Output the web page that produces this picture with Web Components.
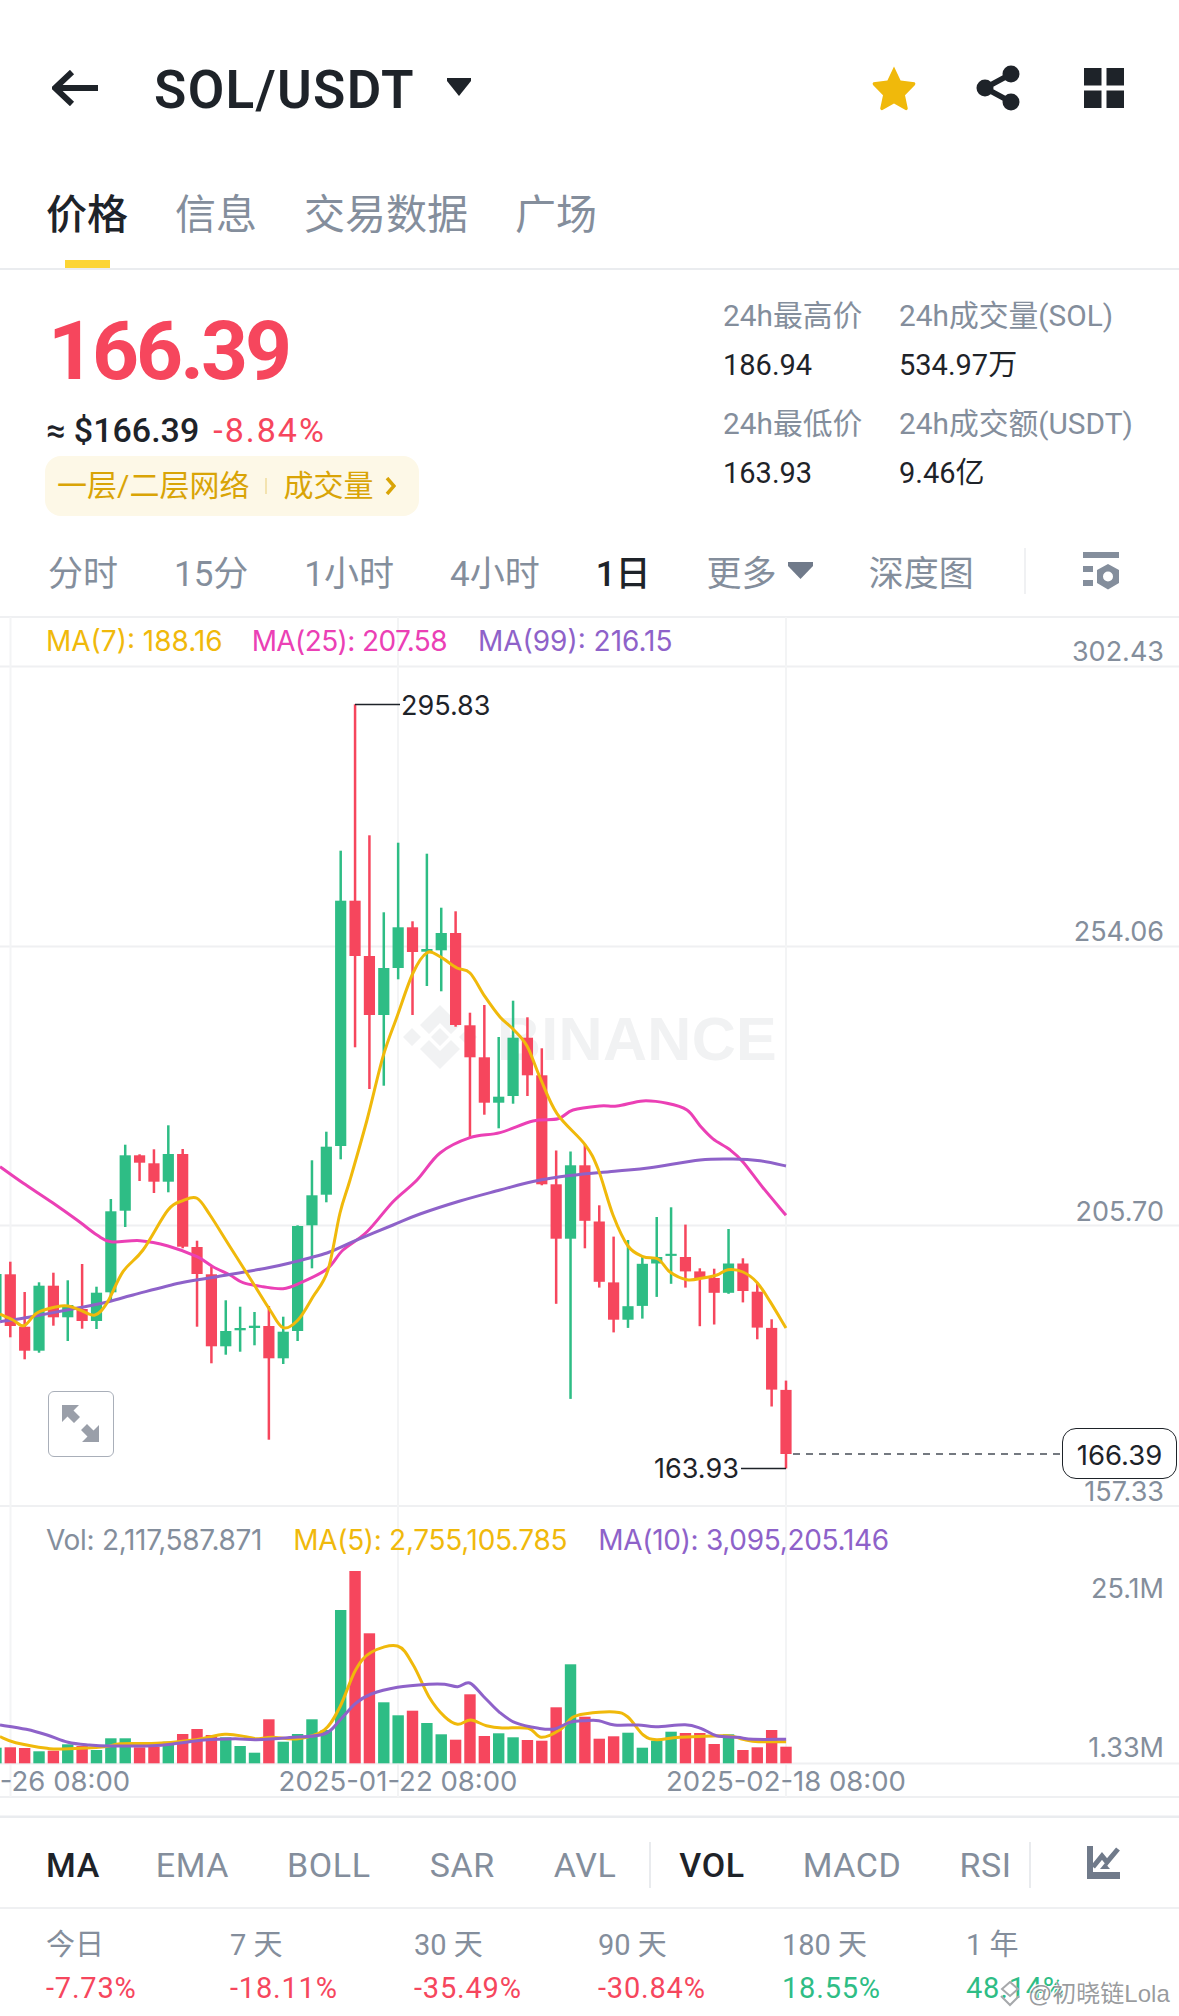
<!DOCTYPE html>
<html lang="zh">
<head>
<meta charset="utf-8">
<title>SOL/USDT</title>
<style>
  html, body { margin: 0; padding: 0; background: #fff; }
  body {
    width: 1179px; height: 2016px; overflow: hidden; position: relative;
    font-family: Roboto, "Noto Sans CJK SC", sans-serif; color: #1E2329;
  }
</style>
</head>
<body>
  <app-header></app-header>
  <tab-bar>
    <tab-item active>价格</tab-item>
    <tab-item>信息</tab-item>
    <tab-item>交易数据</tab-item>
    <tab-item>广场</tab-item>
  </tab-bar>
  <price-summary></price-summary>
  <period-bar></period-bar>
  <kline-chart></kline-chart>
  <indicator-bar></indicator-bar>
  <return-strip></return-strip>
  <weibo-mark></weibo-mark>

<script>
// top bar: back, pair name, favourite / share / layout icons
class AppHeader extends HTMLElement {
  constructor() {
    super();
    this.attachShadow({ mode: "open" }).innerHTML = `
    <style>
      :host { display: flex; align-items: center; height: 176px; padding: 0 55px 0 52px; box-sizing: border-box; }
      .title { font-size: 53px; font-weight: 600; margin-left: 54px; margin-top: 4px; letter-spacing: 1.3px; line-height: 60px; }
      .caret { margin-left: 32px; margin-top: -3px; display: block; }
      .icons { margin-left: auto; display: flex; align-items: center; }
      svg { display: block; }
    </style>
    <svg width="48" height="36" viewBox="0 0 48 36"><path d="M20 2 L3 18 L20 34 M4 18 H46" fill="none" stroke="#1E2329" stroke-width="6"/></svg>
    <span class="title">SOL/USDT</span>
    <svg class="caret" width="24" height="18" viewBox="0 0 24 18"><path d="M0 0 H24 V3 L12 18 L0 3 Z" fill="#1E2329"/></svg>
    <div class="icons">
      <svg width="44" height="46" viewBox="0 0 44 46" style="margin-right:60px"><path d="M22 1.5 L28.6 15.4 L42.6 17.2 Q44 18.5 43 20 L33 30.2 L35.8 43.4 Q35.3 45.6 33.5 45 L22 38.4 L10.5 45 Q8.7 45.6 8.2 43.4 L11 30.2 L1 20 Q0 18.5 1.4 17.2 L15.4 15.4 Z" fill="#F0B90B"/></svg>
      <svg width="44" height="46" viewBox="0 0 44 46" style="margin-right:64px"><path d="M35 9 L9 23 L35 37" fill="none" stroke="#1E2329" stroke-width="5.5"/><circle cx="35" cy="9" r="8.5" fill="#1E2329"/><circle cx="9" cy="23" r="8.5" fill="#1E2329"/><circle cx="35" cy="37" r="8.5" fill="#1E2329"/></svg>
      <svg width="40" height="40" viewBox="0 0 40 40"><path d="M0 0 H17.5 V17.5 H0 Z M22.5 0 H40 V17.5 H22.5 Z M0 22.5 H17.5 V40 H0 Z M22.5 22.5 H40 V40 H22.5 Z" fill="#1E2329"/></svg>
    </div>`;
  }
}
customElements.define("app-header", AppHeader);

class TabBar extends HTMLElement {
  constructor() {
    super();
    this.attachShadow({ mode: "open" }).innerHTML = `
    <style>
      :host { display: flex; gap: 47px; height: 94px; padding-left: 46px; box-sizing: border-box; border-bottom: 2px solid #EAECEF; }
    </style>
    <slot></slot>`;
  }
}
customElements.define("tab-bar", TabBar);

class TabItem extends HTMLElement {
  constructor() {
    super();
    this.attachShadow({ mode: "open" }).innerHTML = `
    <style>
      :host { display: block; position: relative; height: 92px; line-height: 78px; font-size: 41px; color: #848E9C; }
      :host([active]) { color: #1E2329; font-weight: 500; }
      :host([active])::after {
        content: ""; position: absolute; left: 50%; bottom: 0; width: 45px; height: 8px; margin-left: -22.5px; background: #FCD535;
      }
    </style>
    <slot></slot>`;
  }
}
customElements.define("tab-item", TabItem);

// last price block and the 24h numbers on the right
class PriceSummary extends HTMLElement {
  constructor() {
    super();
    this.attachShadow({ mode: "open" }).innerHTML = `
    <style>
      :host { display: flex; height: 275px; box-sizing: border-box; }
      .left { width: 723px; padding-left: 46px; box-sizing: border-box; }
      .price { font-size: 82px; font-weight: 700; color: #F6465D; line-height: 82px; margin-top: 40px; margin-left: 2px; letter-spacing: -3px; }
      .fiat { display: flex; gap: 14px; font-size: 34px; line-height: 40px; margin-top: 18px; font-weight: 500; }
      .fiat .chg { color: #F6465D; font-weight: 400; letter-spacing: 2px; }
      .pill {
        display: inline-flex; align-items: center; width: 374px; height: 60px; margin-top: 6px; margin-left: -1px; padding-left: 12px; box-sizing: border-box;
        background: #FDF8E7; border-radius: 16px; color: #D9A406; font-size: 30px; line-height: 58px; white-space: nowrap;
      }
      .sep { width: 2px; height: 16px; background: #F3E3B0; margin: 0 16px 0 16px; }
      .pill svg { margin-left: 12px; }
      .stats { display: grid; grid-template-columns: 176px auto; grid-auto-rows: 40px; padding-top: 26px; font-size: 29px; line-height: 40px; white-space: nowrap; }
      .stats .k { color: #848E9C; font-size: 29.8px; }
      .stats .v { margin-top: 9px; }
      .stats .k2 { margin-top: 28px; }
      .stats .v2 { margin-top: 37px; }
    </style>
    <div class="left">
      <div class="price">166.39</div>
      <div class="fiat"><span>≈ $166.39</span><span class="chg">-8.84%</span></div>
      <div class="pill"><span>一层/二层网络</span><i class="sep"></i><span>成交量</span>
        <svg width="11" height="18" viewBox="0 0 11 18"><path d="M2 1 L9 9 L2 17" fill="none" stroke="#D9A406" stroke-width="3.5"/></svg></div>
    </div>
    <div class="stats">
      <span class="k">24h最高价</span><span class="k">24h成交量(SOL)</span>
      <span class="v">186.94</span><span class="v">534.97万</span>
      <span class="k k2">24h最低价</span><span class="k k2">24h成交额(USDT)</span>
      <span class="v v2">163.93</span><span class="v v2">9.46亿</span>
    </div>`;
  }
}
customElements.define("price-summary", PriceSummary);

class PeriodBar extends HTMLElement {
  constructor() {
    super();
    this.attachShadow({ mode: "open" }).innerHTML = `
    <style>
      :host { display: flex; align-items: center; height: 71px; padding: 0 0 20px 48px; box-sizing: border-box; font-size: 35px; color: #848E9C; white-space: nowrap; position: relative; }
      span { margin-right: 56px; }
      .on { color: #1E2329; font-weight: 500; margin-right: 56px; }
      .more { display: flex; align-items: center; gap: 11px; margin-right: 56px; }
      .div { width: 2px; height: 46px; background: #F0F1F3; margin-right: 57px; }
      svg { display: block; }
    </style>
    <span>分时</span><span>15分</span><span>1小时</span><span>4小时</span><span class="on">1日</span>
    <span class="more">更多<svg width="25" height="17" viewBox="0 0 25 17"><path d="M0 0 H25 V4 L12.5 17 L0 4 Z" fill="#707A8A"/></svg></span>
    <span style="margin-right:50px">深度图</span><i class="div"></i>
    <svg width="37" height="38" viewBox="0 0 37 38"><path d="M0 0 H36 V6 H0 Z M0 14 H10 V20 H0 Z M0 28 H10 V34 H0 Z" fill="#848E9C"/><path fill-rule="evenodd" d="M25 12 L36 18 V31 L25 37.5 L14 31 V18 Z M25 19.5 A5 5 0 1 0 25 29.5 A5 5 0 1 0 25 19.5 Z" fill="#848E9C"/></svg>`;
  }
}
customElements.define("period-bar", PeriodBar);

// [high, bodyTop, bodyBottom, low, up?] in page pixels, read off the reference
const CANDLES = [
  [1265,1274,1320,1330,1],
  [1261.7,1274.3,1326,1337.3,0],[1292,1326.7,1350.7,1359.3,0],[1282.3,1285.7,1350.7,1352.7,1],[1272.7,1285.7,1317.3,1325.7,0],
  [1280.3,1305,1317.3,1341,1],[1264,1309,1321,1328.7,0],[1286.7,1292.7,1321,1329,1],[1199,1211.3,1292.3,1300,1],
  [1144.7,1155.3,1210.7,1227,1],[1154.3,1155.3,1162.7,1181,0],[1149.3,1163.3,1181.7,1193,0],[1125.3,1154,1181.7,1192.3,1],
  [1149,1154,1246.7,1248.3,0],[1240.7,1247,1274,1326.7,0],[1266.7,1274.3,1346.3,1363.3,0],[1300.3,1331,1346.3,1354.7,1],
  [1306.7,1328,1330.3,1351.7,1],[1312,1325.7,1328,1345.3,1],[1306,1326,1358.3,1439.7,0],[1316.7,1331.7,1358.3,1364,1],
  [1225.3,1226,1331,1341,1],[1160.3,1195.3,1225.3,1268.3,1],[1131.7,1146.7,1194.7,1202.3,1],[850.7,900.7,1146,1159.3,1],
  [704.3,900.7,956,1047.3,0],[835.3,956,1015,1089,0],[912.3,968,1015,1085.7,1],[842.7,927.3,968,979.3,1],
  [921.3,927.3,952,1015,0],[853.7,949,951.7,986,1],[907.7,933,950.3,991.3,1],[911.3,933,1025,1026.7,0],
  [1012.7,1025.3,1057.3,1137.3,0],[1005,1057.3,1102.7,1114.7,0],[1037,1096.7,1102.7,1128.3,1],[1000.7,1037.7,1096,1103.7,1],
  [1017.3,1037.7,1075.3,1096,0],[1048.3,1075.3,1184.3,1185.3,0],[1150.5,1184.3,1238.7,1303.8,0],[1151.5,1165.3,1238.7,1398.9,1],
  [1144.6,1165.3,1220.8,1248.3,0],[1205.3,1221.5,1281.8,1287.6,0],[1236.6,1282.4,1319.7,1332.4,0],[1240,1306.2,1319.7,1327.9,1],
  [1256.6,1263.8,1305.9,1318.6,1],[1217,1257,1263.5,1296.9,1],[1207.3,1253.8,1255.9,1283.8,1],[1224.6,1257,1271.4,1287.6,0],
  [1268.3,1271.4,1278,1326.2,0],[1268.7,1278,1292.8,1324.5,0],[1229,1263.5,1292.8,1293.8,1],[1258.3,1263.5,1291,1302.4,0],
  [1282.4,1291.7,1327.6,1339.3,0],[1319.3,1327.9,1389.6,1406.5,0],[1380.6,1389.9,1454,1468.5,0]
];
const MA7 = [[0,1314],[13,1320],[24,1325.7],[37,1313],[57,1306.7],[68,1306],[80,1310],[95,1315],[107,1303],[123,1271.7],[143,1250],[168,1210],[183,1200.7],[197,1198.3],[210,1215],[230,1246.7],[253,1283],[270,1310],[283,1327.7],[298,1320],[313,1296.7],[328,1270],[340,1213],[350,1180],[367,1120],[383,1056.7],[397,1016.7],[413,973],[427,952.7],[440,956.7],[457,968],[470,973],[485,996.7],[500,1017],[513,1029],[527,1046],[540,1077.5],[557,1113.6],[585,1144.6],[598,1168.8],[613,1215],[628,1246],[643,1256.6],[658,1259],[670,1272],[687,1279.7],[703,1278],[717,1275],[728,1269.7],[743,1272],[757,1282.4],[770,1301.4],[786,1328]];
const MA25 = [[0,1166.7],[23,1183],[53,1203],[77,1220],[97,1235],[111,1241.7],[140,1240.7],[168,1246],[197,1256.7],[213,1266.7],[230,1275],[243,1282.7],[263,1286.7],[283,1288.7],[300,1283],[327,1269],[343,1250],[367,1231.7],[393,1201.7],[417,1180],[440,1153],[470,1137.7],[500,1132.6],[533,1121],[558,1118.8],[573,1110],[600,1106],[617,1106],[643,1100.9],[667,1103.3],[687,1110],[700,1125.7],[713,1138.8],[730,1149.8],[743,1161.9],[763,1187.7],[786,1215.3]];
const MA99 = [[0,1321.7],[30,1317],[67,1310],[103,1303],[133,1295],[180,1283],[217,1276.7],[267,1268],[290,1263],[327,1253],[353,1241.7],[393,1225],[420,1214],[460,1201],[500,1190],[533,1181.5],[570,1175.6],[617,1171],[650,1167.7],[700,1160],[733,1159],[760,1160.8],[786,1166]];
// volume: z values from the crop, x / 1.912 and 1500 + z / 3 below
const VOL_TOPS = [743,742,744,754,752,733,738,750,715,715,742,740,725,702,687,705,712,738,758,658,725,702,658,690,330,213,400,607,646,632,669,703,719,583,708,700,712,720,722,622,493,650,716,709,698,743,722,695,699,699,732,703,750,742,690,740];
const VOL_MA5 = [[0,710],[30,728],[90,745],[120,747],[200,740],[230,731],[300,730],[370,720],[430,703],[470,710],[490,716],[520,712],[570,716],[620,690],[650,620],[680,510],[710,457],[760,438],[790,495],[820,590],[850,650],[875,673],[900,660],[930,677],[960,684],[1010,685],[1035,712],[1070,690],[1095,652],[1120,641],[1175,636],[1200,650],[1230,705],[1255,719],[1300,712],[1390,707],[1420,718],[1450,725],[1503,725]];
const VOL_MA10 = [[0,675],[50,688],[90,705],[130,727],[170,735],[210,738],[290,737],[340,730],[390,720],[450,716],[490,719],[550,713],[620,702],[650,660],[680,610],[710,582],[760,562],[820,553],[850,553],[875,560],[898,549],[925,590],[955,637],[985,668],[1030,685],[1060,687],[1090,667],[1120,662],[1145,662],[1175,675],[1220,675],[1255,680],[1310,674],[1340,685],[1370,707],[1410,712],[1440,718],[1503,718]];

const GREEN = "#2EBD85", RED = "#F6465D";
const PITCH = (786 - 10.3) / 54;

function smooth(pts) {
  let d = "M" + pts[0][0] + " " + pts[0][1];
  for (let i = 0; i < pts.length - 1; i++) {
    const p0 = pts[i - 1] || pts[i], p1 = pts[i], p2 = pts[i + 1], p3 = pts[i + 2] || p2;
    const c1x = p1[0] + (p2[0] - p0[0]) / 6, c1y = p1[1] + (p2[1] - p0[1]) / 6;
    const c2x = p2[0] - (p3[0] - p1[0]) / 6, c2y = p2[1] - (p3[1] - p1[1]) / 6;
    d += ` C${c1x.toFixed(1)} ${c1y.toFixed(1)} ${c2x.toFixed(1)} ${c2y.toFixed(1)} ${p2[0]} ${p2[1]}`;
  }
  return d;
}

class KlineChart extends HTMLElement {
  constructor() {
    super();
    let candles = "", vols = "";
    CANDLES.forEach((c, i) => {
      const x = 10.3 + PITCH * (i - 1), col = c[4] ? GREEN : RED;
      candles += `<rect x="${(x - 1.25).toFixed(2)}" y="${c[0]}" width="2.5" height="${(c[3] - c[0]).toFixed(1)}" fill="${col}"/>`;
      candles += `<rect x="${(x - 5.6).toFixed(2)}" y="${c[1]}" width="11.2" height="${(c[2] - c[1]).toFixed(1)}" fill="${col}"/>`;
      const top = 1500 + VOL_TOPS[i] / 3;
      vols += `<rect x="${(x - 5.7).toFixed(2)}" y="${top.toFixed(1)}" width="11.4" height="${(1763.3 - top).toFixed(1)}" fill="${col}"/>`;
    });
    const volPts = a => a.map(p => [+(p[0] / 1.912).toFixed(1), +(1500 + p[1] / 3).toFixed(1)]);

    this.attachShadow({ mode: "open" }).innerHTML = `
    <style>
      :host { display: block; position: relative; height: 1202px; font-family: Inter, "Liberation Sans", sans-serif; font-size: 27px; color: #848E9C; overflow: hidden; }
      svg.canvas { position: absolute; left: 0; top: 0; }
      .t { position: absolute; line-height: 32px; height: 32px; white-space: nowrap; margin-top: -16px; }
      .r { right: 15px; }
      .d { color: #1E2329; }
      .legend { position: absolute; left: 46px; display: flex; font-size: 28px; line-height: 32px; margin-top: -16px; white-space: nowrap; }
      .wm { position: absolute; left: 497px; top: 393px; font-size: 61px; line-height: 60px; font-weight: 700; color: #F1F2F3; letter-spacing: .3px; font-family: "Liberation Sans", sans-serif; }
      .tag { position: absolute; left: 1062px; top: 812px; width: 115px; height: 51px; box-sizing: border-box; border: 1.5px solid #1E2329; border-radius: 14px; background: #fff; color: #1E2329; text-align: center; line-height: 52px; font-size: 27.5px; }
      .expand { position: absolute; left: 48px; top: 775px; width: 66px; height: 66px; box-sizing: border-box; border: 1.5px solid #A9AFB9; border-radius: 6px; background: #fff; display: flex; align-items: center; justify-content: center; }
      .date { position: absolute; top: 1149px; transform: translateX(-50%); font-size: 27.5px; line-height: 32px; white-space: nowrap; }
    </style>
    <div class="wm">BINANCE</div>
    <svg class="canvas" width="1179" height="1202" viewBox="0 616 1179 1202">
      <!-- grid -->
      <path d="M0 617 H1179 M0 666.5 H1179 M0 946.5 H1179 M0 1225.5 H1179 M0 1506 H1179 M0 1763.5 H1179 M0 1797 H1179" stroke="#EFF0F2" stroke-width="2"/>
      <path d="M10.5 617 V1797 M398 617 V1797 M786 617 V1797" stroke="#F3F4F5" stroke-width="2"/>
      <path d="M0 1818 H1179" stroke="#EAECEF" stroke-width="5"/>
      <!-- watermark logo -->
      <path d="M440 1002 L460 1022 L451 1031 L440 1020 L429 1031 L420 1022 Z M412 1025 L421 1034 L412 1043 L403 1034 Z M468 1025 L477 1034 L468 1043 L459 1034 Z M440 1025 L449 1034 L440 1043 L431 1034 Z M420 1046 L429 1037 L440 1048 L451 1037 L460 1046 L440 1066 Z" fill="#F1F2F3" transform="translate(0,3)"/>
      ${candles}
      <path d="${smooth(MA25)}" fill="none" stroke="#EB40B5" stroke-width="3"/>
      <path d="${smooth(MA99)}" fill="none" stroke="#8E62C9" stroke-width="3"/>
      <path d="${smooth(MA7)}" fill="none" stroke="#F0B90B" stroke-width="3"/>
      ${vols}
      <path d="${smooth(volPts(VOL_MA5))}" fill="none" stroke="#F0B90B" stroke-width="3"/>
      <path d="${smooth(volPts(VOL_MA10))}" fill="none" stroke="#8E62C9" stroke-width="3"/>
      <!-- high / low / last markers -->
      <path d="M355 704.5 H400 M741 1468.5 H786" stroke="#1E2329" stroke-width="1.5" fill="none"/>
      <path d="M793 1454 H1062" stroke="#474D57" stroke-width="1.5" stroke-dasharray="7 6" fill="none"/>
    </svg>

    <div class="legend" style="top:25px">
      <span style="color:#F0B90B;margin-right:29px">MA(7): 188.16</span>
      <span style="color:#EB40B5;margin-right:31px;letter-spacing:-.6px">MA(25): 207.58</span>
      <span style="color:#8E62C9">MA(99): 216.15</span>
    </div>
    <div class="legend" style="top:924px;letter-spacing:-.3px">
      <span style="margin-right:31px">Vol: 2,117,587.871</span>
      <span style="color:#F0B90B;margin-right:31px">MA(5): 2,755,105.785</span>
      <span style="color:#8E62C9">MA(10): 3,095,205.146</span>
    </div>

    <span class="t r" style="top:36px">302.43</span>
    <span class="t r" style="top:316px">254.06</span>
    <span class="t r" style="top:596px">205.70</span>
    <span class="t r" style="top:876px">157.33</span>
    <span class="t r" style="top:973px">25.1M</span>
    <span class="t r" style="top:1132px">1.33M</span>

    <span class="t d" style="left:401px;top:90px">295.83</span>
    <span class="t d" style="left:654px;top:853px">163.93</span>
    <div class="tag">166.39</div>

    <div class="expand">
      <svg width="38" height="38" viewBox="0 0 38 38"><path d="M0 0 H17 L11.5 5.5 L18 12 L12 18 L5.5 11.5 L0 17 Z M37 37 H20 L25.5 31.5 L19 25 L25 19 L31.5 25.5 L37 20 Z" fill="#9A9FA9"/></svg>
    </div>

    <span class="date" style="left:65px">-26 08:00</span>
    <span class="date" style="left:398px">2025-01-22 08:00</span>
    <span class="date" style="left:786px">2025-02-18 08:00</span>`;
  }
}
customElements.define("kline-chart", KlineChart);

class IndicatorBar extends HTMLElement {
  constructor() {
    super();
    this.attachShadow({ mode: "open" }).innerHTML = `
    <style>
      :host { display: flex; align-items: center; height: 91px; box-sizing: border-box; padding: 5px 0 0 46px; border-bottom: 2px solid #EFF0F2; font-size: 34px; letter-spacing: .6px; color: #848E9C; white-space: nowrap; }
      span { margin-right: 59px; }
      .on { color: #1E2329; font-weight: 500; }
      .div { width: 2px; height: 46px; background: #E9EBEE; }
      svg { display: block; margin-top: -5px; }
    </style>
    <span class="on" style="margin-right:56px">MA</span><span style="margin-right:58px">EMA</span><span>BOLL</span><span>SAR</span><span style="margin-right:33px">AVL</span><i class="div" style="margin-right:28px"></i>
    <span class="on" style="margin-right:58px">VOL</span><span style="margin-right:58px">MACD</span><span style="margin-right:17px">RSI</span><i class="div" style="margin-right:56px"></i>
    <svg width="33" height="33" viewBox="0 0 33 33"><path d="M0 0 H6 V26 H33 V33 H0 Z" fill="#707A8A"/><path d="M6 21 L15 10 L20 16 L31 3" fill="none" stroke="#707A8A" stroke-width="5"/><path d="M18 17 L23 23 H13 Z" fill="#707A8A"/></svg>`;
  }
}
customElements.define("indicator-bar", IndicatorBar);

class ReturnStrip extends HTMLElement {
  constructor() {
    super();
    const rows = [["今日","-7.73%",0],["7 天","-18.11%",0],["30 天","-35.49%",0],["90 天","-30.84%",0],["180 天","18.55%",1],["1 年","48.14%",1]];
    this.attachShadow({ mode: "open" }).innerHTML = `
    <style>
      :host { display: grid; grid-template-columns: repeat(6, 184px); padding: 16px 0 0 46px; font-size: 29px; line-height: 40px; white-space: nowrap; }
      .k { color: #848E9C; display: block; }
      .v { display: block; margin-top: 3px; color: #F6465D; letter-spacing: .8px; }
      .v.up { color: #2EBD85; }
    </style>
    ${rows.map(r => `<div><span class="k">${r[0]}</span><span class="v ${r[2] ? "up" : ""}">${r[1]}</span></div>`).join("")}`;
  }
}
customElements.define("return-strip", ReturnStrip);

// repost watermark lying over the last cell
class WeiboMark extends HTMLElement {
  constructor() {
    super();
    this.attachShadow({ mode: "open" }).innerHTML = `
    <style>
      :host { position: absolute; left: 1000px; top: 1978px; display: flex; align-items: center; gap: 8px; font-family: "Liberation Sans", "Noto Sans CJK SC", sans-serif; font-size: 24px; line-height: 32px; color: rgba(120,122,126,.75); text-shadow: 1px 1px 0 rgba(255,255,255,.9), -1px -1px 0 rgba(255,255,255,.9); white-space: nowrap; }
      svg { display: block; }
    </style>
    <svg width="20" height="26" viewBox="0 0 20 26"><path d="M10 1 L18 8 L10 15 L2 8 Z M1 15 L10 24 L19 15" fill="none" stroke="#A6A8AB" stroke-width="2"/></svg>
    <span>@初晓链Lola</span>`;
  }
}
customElements.define("weibo-mark", WeiboMark);
</script>
</body>
</html>
